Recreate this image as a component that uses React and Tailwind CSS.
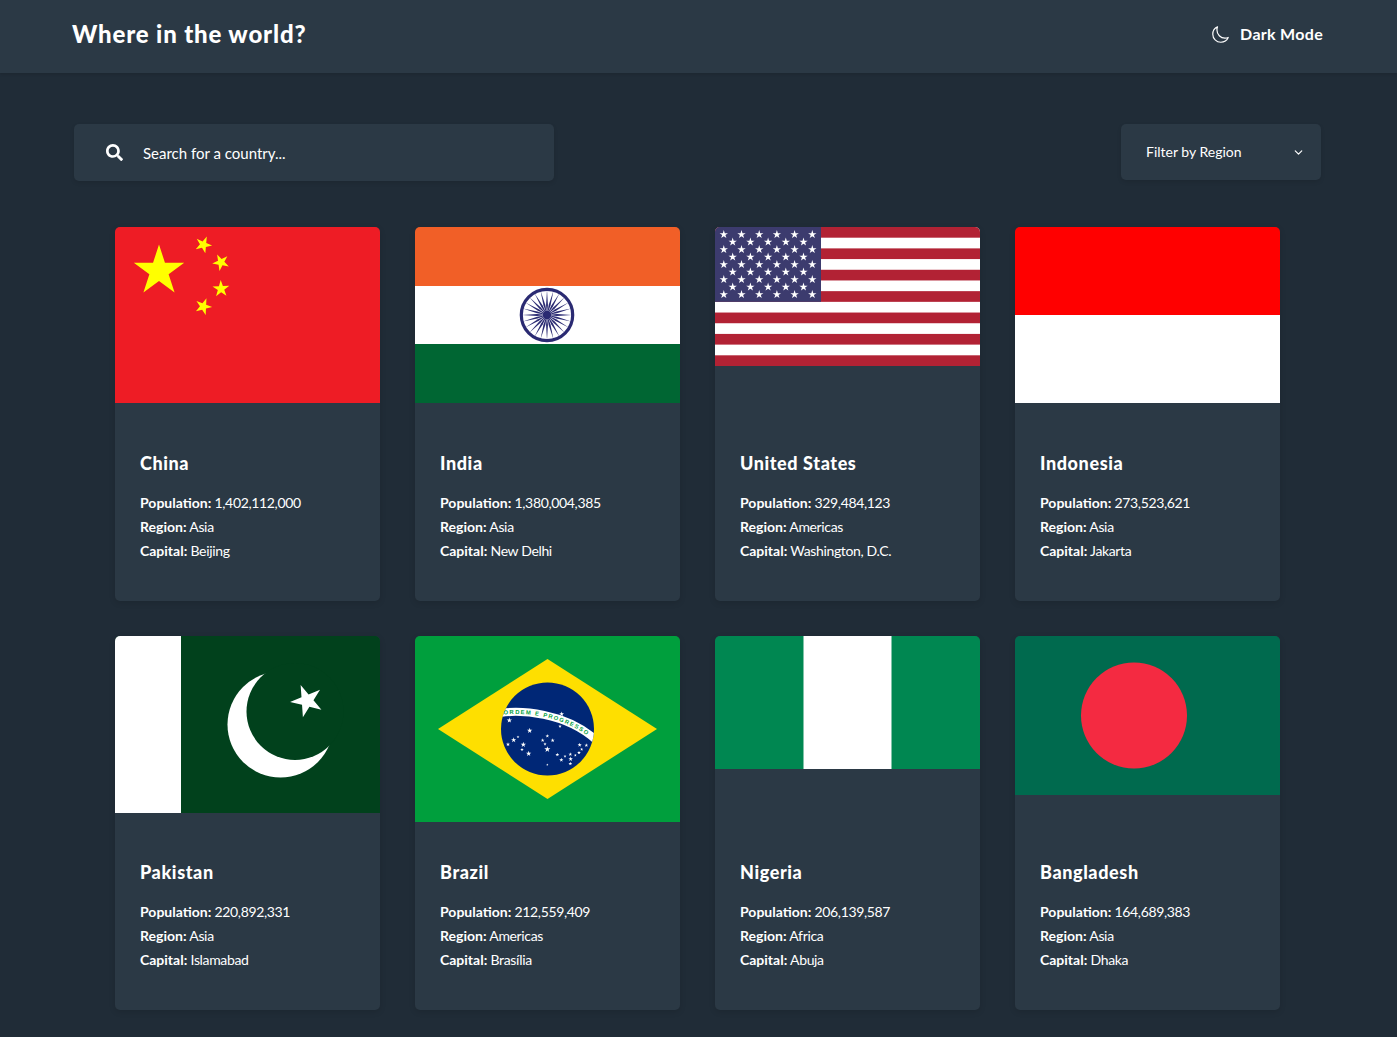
import { useId } from 'react';
import { FaSearch } from 'react-icons/fa';
import { IoMoonOutline } from 'react-icons/io5';
import { ChevronDown } from 'lucide-react';

// five pointed star, as a points string for <polygon>
const starPoints = (cx, cy, r, rot = 0) => {
	const pts = [];
	for (let i = 0; i < 10; i++) {
		const rad = i % 2 === 0 ? r : r * 0.382;
		const a = ((rot - 90 + i * 36) * Math.PI) / 180;
		pts.push(`${cx + rad * Math.cos(a)},${cy + rad * Math.sin(a)}`);
	}
	return pts.join(' ');
};

const Flag = ({ h, children }) => (
	<svg viewBox={`0 0 265 ${h}`} width="265" height={h} className="block">
		{children}
	</svg>
);

const China = () => {
	const u = 265 / 30;
	const small = [
		[10, 2],
		[12, 4],
		[12, 7],
		[10, 9],
	];
	return (
		<Flag h={176}>
			<rect width="265" height="176" fill="#ee1c25" />
			<polygon points={starPoints(44, 44, 26.5)} fill="#ffff00" />
			{small.map(([x, y]) => (
				<polygon
					key={y}
					points={starPoints(
						x * u,
						y * u,
						u,
						(Math.atan2(y - 5, x - 5) * 180) / Math.PI - 90
					)}
					fill="#ffff00"
				/>
			))}
		</Flag>
	);
};

const India = () => (
	<Flag h={176}>
		<rect width="265" height="59" fill="#f15f27" />
		<rect y="59" width="265" height="58" fill="#ffffff" />
		<rect y="117" width="265" height="59" fill="#006633" />
		<circle cx="132" cy="88" r="25.7" fill="#fff" stroke="#2a2a72" strokeWidth="3.2" />
		{Array.from({ length: 24 }).map((_, i) => {
			const a = (i * 15 * Math.PI) / 180;
			const b = a + Math.PI / 2;
			const w = 0.95;
			const mx = 132 + 10 * Math.cos(a);
			const my = 88 + 10 * Math.sin(a);
			return (
				<polygon
					key={i}
					points={`132,88 ${mx + w * Math.cos(b)},${my + w * Math.sin(b)} ${132 + 25 * Math.cos(a)},${88 + 25 * Math.sin(a)} ${mx - w * Math.cos(b)},${my - w * Math.sin(b)}`}
					fill="#2a2a72"
				/>
			);
		})}
		<circle cx="132" cy="88" r="4.2" fill="#2a2a72" />
	</Flag>
);

const UnitedStates = () => {
	const sh = 139 / 13;
	const stars = [];
	for (let row = 0; row < 9; row++) {
		const count = row % 2 === 0 ? 6 : 5;
		for (let c = 0; c < count; c++) {
			const x = (row % 2 === 0 ? 8.8 : 17.7) + c * 17.7;
			stars.push(<polygon key={`${row}-${c}`} points={starPoints(x, 7.5 + row * 7.5, 4.4)} fill="#fff" />);
		}
	}
	return (
		<Flag h={139}>
			<rect width="265" height="139" fill="#fff" />
			{Array.from({ length: 7 }).map((_, i) => (
				<rect key={i} y={i * 2 * sh} width="265" height={sh} fill="#b22234" />
			))}
			<rect width="106" height={sh * 7} fill="#3c3b6e" />
			{stars}
		</Flag>
	);
};

const Indonesia = () => (
	<Flag h={176}>
		<rect width="265" height="88" fill="#ff0000" />
		<rect y="88" width="265" height="88" fill="#fff" />
	</Flag>
);

const Pakistan = () => (
	<Flag h={177}>
		<rect width="265" height="177" fill="#01411c" />
		<rect width="66" height="177" fill="#fff" />
		<circle cx="165.5" cy="88.5" r="53" fill="#fff" />
		<circle cx="180" cy="75.5" r="48.5" fill="#01411c" />
		<polygon points={starPoints(192, 64.7, 17, -22)} fill="#fff" />
	</Flag>
);

const brazilStars = [
	[395, 192, 2.6], [390, 229, 1.8], [238, 211, 2.8], [299, 242, 2.8], [264, 261, 1.5],
	[251, 270, 2.8], [234, 283, 2.2], [280, 284, 2.8], [276, 299, 1.8], [296, 311, 2.8],
	[338, 271, 2], [352, 258, 2], [368, 271, 2.2], [345, 282, 1.7], [352, 298, 3.2],
	[352, 344, 1.2], [382, 314, 2], [394, 330, 2.2], [405, 319, 1.5], [421, 313, 2],
	[422, 327, 2.4], [421, 341, 2], [436, 316, 1.5], [447, 308, 2], [455, 298, 1.7],
	[449, 285, 2.2], [469, 286, 2],
];

const Brazil = () => {
	const id = useId();
	return (
		<Flag h={186}>
			<rect width="265" height="186" fill="#009f3d" />
			<polygon points="23,93 132.5,23 242,93 132.5,163" fill="#fedf00" />
			<circle cx="132.5" cy="93" r="46.5" fill="#002776" />
			<clipPath id={`${id}c`}>
				<circle cx="132.5" cy="93" r="46.5" />
			</clipPath>
			<g clipPath={`url(#${id}c)`}>
				<path d="M85 77 C 105 74, 150 76, 181 104" fill="none" stroke="#fff" strokeWidth="8" />
			</g>
			<path id={`${id}t`} d="M85 79 C 105 76, 150 78, 180 106" fill="none" />
			<text fontSize="5.8" fontWeight="700" fill="#009f3d" fontFamily="'Liberation Sans', sans-serif" letterSpacing="1.3">
				<textPath href={`#${id}t`} startOffset="4">
					ORDEM E PROGRESSO
				</textPath>
			</text>
			{brazilStars.map(([x, y, r], i) => (
				<polygon key={i} points={starPoints((x / 3) + 15, (y / 3) + 14, r)} fill="#fff" />
			))}
		</Flag>
	);
};

const Nigeria = () => (
	<Flag h={133}>
		<rect width="265" height="133" fill="#008751" />
		<rect x="88.5" width="88" height="133" fill="#fff" />
	</Flag>
);

const Bangladesh = () => (
	<Flag h={159}>
		<rect width="265" height="159" fill="#006a4e" />
		<circle cx="119" cy="79.5" r="53" fill="#f42a41" />
	</Flag>
);

const countries = [
	{ name: 'China', population: '1,402,112,000', region: 'Asia', capital: 'Beijing', flag: <China /> },
	{ name: 'India', population: '1,380,004,385', region: 'Asia', capital: 'New Delhi', flag: <India /> },
	{ name: 'United States', population: '329,484,123', region: 'Americas', capital: 'Washington, D.C.', flag: <UnitedStates /> },
	{ name: 'Indonesia', population: '273,523,621', region: 'Asia', capital: 'Jakarta', flag: <Indonesia /> },
	{ name: 'Pakistan', population: '220,892,331', region: 'Asia', capital: 'Islamabad', flag: <Pakistan /> },
	{ name: 'Brazil', population: '212,559,409', region: 'Americas', capital: 'Brasília', flag: <Brazil /> },
	{ name: 'Nigeria', population: '206,139,587', region: 'Africa', capital: 'Abuja', flag: <Nigeria /> },
	{ name: 'Bangladesh', population: '164,689,383', region: 'Asia', capital: 'Dhaka', flag: <Bangladesh /> },
];

const Detail = ({ label, value }) => (
	<p className="text-sm leading-6 tracking-[-0.35px]">
		<span className="font-bold tracking-[0px]">{label}:</span> {value}
	</p>
);

const Card = ({ country }) => (
	<div className="h-[374px] rounded-[5px] bg-[#2b3945] shadow-[0_2px_6px_rgba(0,0,0,0.12)] overflow-hidden">
		<div className="h-[186px]">{country.flag}</div>
		<div className="px-[25px] pt-[37px]">
			<h2 className="text-[18px] leading-[27px] font-black tracking-[0.6px] mb-[14px]">{country.name}</h2>
			<Detail label="Population" value={country.population} />
			<Detail label="Region" value={country.region} />
			<Detail label="Capital" value={country.capital} />
		</div>
	</div>
);

const App = () => {
	return (
		<div className="min-h-screen bg-[#202c37] text-white font-['Lato','Noto_Sans',sans-serif] pb-[27px]">
			<header className="h-[73px] bg-[#2b3945] shadow-[0_1px_3px_rgba(0,0,0,0.15)] flex items-center justify-between pl-[72px] pr-[74px] pb-[5px]">
				<h1 className="text-2xl font-black tracking-[0.85px]">Where in the world?</h1>
				<div className="flex items-center gap-[10px] font-bold tracking-[0.3px]">
					<IoMoonOutline size={19} />
					<span>Dark Mode</span>
				</div>
			</header>
			<main>
				<div className="mt-[51px] pl-[74px] pr-[76px] flex items-start justify-between">
					<div className="w-[480px] h-[57px] rounded-[5px] bg-[#2b3945] shadow-[0_2px_4px_rgba(0,0,0,0.1)] flex items-center pl-[32px] gap-[20px]">
						<FaSearch size={17} />
						<span className="text-[15px] pt-[1px]">Search for a country...</span>
					</div>
					<div className="w-[200px] h-[56px] rounded-[5px] bg-[#2b3945] shadow-[0_2px_4px_rgba(0,0,0,0.1)] flex items-center justify-between pl-[25px] pr-[16px]">
						<span className="text-sm">Filter by Region</span>
						<ChevronDown size={13} strokeWidth={2.2} />
					</div>
				</div>
				<div className="mt-[46px] ml-[115px] grid grid-cols-[repeat(4,265px)] gap-[35px]">
					{countries.map((country) => (
						<Card key={country.name} country={country} />
					))}
				</div>
			</main>
		</div>
	);
};

export default App;
